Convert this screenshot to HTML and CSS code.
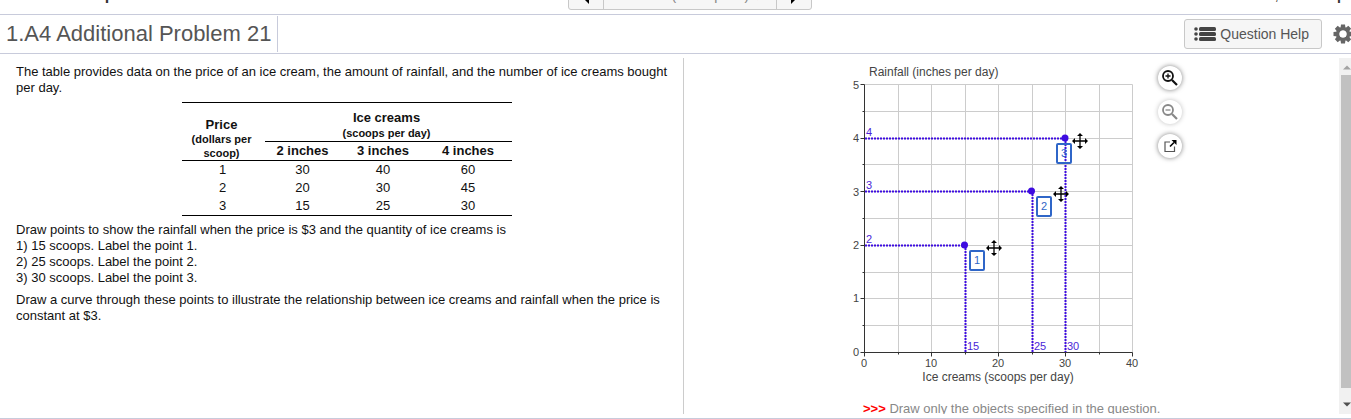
FILE: index.html
```html
<!DOCTYPE html>
<html lang="en">
<head>
<meta charset="utf-8">
<title>1.A4 Additional Problem 21</title>
<link rel="stylesheet" href="styles.css">
</head>
<body>
<div class="page">
  <div class="topbar">
    <div class="score"><b>Score:</b> 0 of 1 <b>pt</b></div>
    <div class="pager">
      <button class="pager-btn" aria-label="Previous question"><svg width="12" height="16" viewBox="0 0 12 16"><path d="M9 0v16L1 8z"/></svg></button>
      <button class="pager-label">16 of 42 (0 complete) <span class="caret">▼</span></button>
      <button class="pager-btn" aria-label="Next question"><svg width="12" height="16" viewBox="0 0 12 16"><path d="M3 0v16l8-8z"/></svg></button>
    </div>
    <div class="hw-score"><b>HW Score:</b> 33.33%, 14 of 42 <b>pts</b></div>
  </div>

  <header class="header">
    <h1 class="title">1.A4 Additional Problem 21</h1>
    <div class="header-tools">
      <button class="help-btn">
        <svg width="22" height="14" viewBox="0 0 22 14"><g fill="#444"><circle cx="2" cy="2" r="1.800"/><circle cx="2" cy="7" r="1.800"/><circle cx="2" cy="12" r="1.800"/><rect x="5" y="0" width="17" height="4" rx="1.500"/><rect x="5" y="5" width="17" height="4" rx="1.500"/><rect x="5" y="10" width="17" height="4" rx="1.500"/></g></svg>
        Question Help
      </button>
      <button class="gear-btn" aria-label="Settings">
        <svg width="20" height="20" viewBox="-10 -10 20 20"><g fill="#666"><path d="M-2-9.500h4L2.600-5h-5.200zM-2 9.500h4L2.600 5h-5.200z"/><path d="M-2-9.500h4L2.600-5h-5.200zM-2 9.500h4L2.600 5h-5.200z" transform="rotate(45)"/><path d="M-2-9.500h4L2.600-5h-5.200zM-2 9.500h4L2.600 5h-5.200z" transform="rotate(90)"/><path d="M-2-9.500h4L2.600-5h-5.200zM-2 9.500h4L2.600 5h-5.200z" transform="rotate(135)"/></g><circle r="5.300" fill="none" stroke="#666" stroke-width="3.600"/><circle r="3.500" fill="#fff"/></svg>
      </button>
    </div>
  </header>

  <main class="main">
    <section class="question">
      <p>The table provides data on the price of an ice cream, the amount of rainfall, and the number of ice creams bought per day.</p>
      <table class="data">
        <colgroup><col class="c1"><col class="c2"><col class="c3"><col class="c4"></colgroup>
        <thead>
          <tr><th class="price" rowspan="2" scope="col">Price<br><small>(dollars per scoop)</small></th><th class="group" colspan="3" scope="colgroup">Ice creams<br><small>(scoops per day)</small></th></tr>
          <tr class="sub"><th scope="col">2 inches</th><th scope="col">3 inches</th><th scope="col">4 inches</th></tr>
        </thead>
        <tbody>
          <tr><td>1</td><td>30</td><td>40</td><td>60</td></tr>
          <tr><td>2</td><td>20</td><td>30</td><td>45</td></tr>
          <tr><td>3</td><td>15</td><td>25</td><td>30</td></tr>
        </tbody>
      </table>
      <p>Draw points to show the rainfall when the price is $3 and the quantity of ice creams is<br>1) 15 scoops. Label the point 1.<br>2) 25 scoops. Label the point 2.<br>3) 30 scoops. Label the point 3.</p>
      <p>Draw a curve through these points to illustrate the relationship between ice creams and rainfall when the price is constant at $3.</p>
    </section>

    <section class="graph-pane">
      <div class="graph-row">
        <svg class="chart" width="300" height="332" viewBox="0 0 300 332" role="img" aria-label="Rainfall against ice creams">
          <g transform="translate(.5 .5)" fill="none">
            <path class="grid" d="M48 24v268M81 24v268M115 24v268M148 24v268M182 24v268M215 24v268M249 24v268M282 24v268M14 24h268M14 51h268M14 78h268M14 104h268M14 131h268M14 158h268M14 185h268M14 212h268M14 238h268M14 265h268"/>
            <path class="axis" d="M14 24v272M10 292h272M10 24h4M10 78h4M10 131h4M10 185h4M10 238h4M12 51h2M12 104h2M12 158h2M12 212h2M12 265h2M48 292v2M81 292v4M115 292v2M148 292v4M182 292v2M215 292v4M249 292v2M282 292v4"/>
          </g>
          <path class="guide" d="M15 78.500h200M15 131.500h167M15 185.500h100M215.500 78v214M182.500 131v161M115.500 185v107"/>
          <text class="axis-title" x="19" y="16">Rainfall (inches per day)</text>
          <text class="axis-title" x="148" y="321" text-anchor="middle">Ice creams (scoops per day)</text>
          <g class="tick" text-anchor="end">
            <text x="9" y="29">5</text><text x="9" y="82">4</text><text x="9" y="136">3</text><text x="9" y="189">2</text><text x="9" y="242">1</text><text x="9" y="296">0</text>
          </g>
          <g class="tick" text-anchor="middle">
            <text x="14" y="307">0</text><text x="81" y="307">10</text><text x="148" y="307">20</text><text x="215" y="307">30</text><text x="282" y="307">40</text>
          </g>
          <g class="value">
            <text x="16" y="76">4</text><text x="16" y="129">3</text><text x="16" y="183">2</text>
            <text x="117" y="290">15</text><text x="184" y="290">25</text><text x="217" y="290">30</text>
          </g>
          <g class="point"><circle cx="215" cy="78" r="3.500"/><circle cx="181.500" cy="131" r="3.500"/><circle cx="114.500" cy="185" r="3.500"/></g>
          <g class="tag"><rect x="207" y="84" width="14" height="19" rx="1"/><rect x="187" y="137" width="14" height="19" rx="1"/><rect x="120" y="191" width="14" height="19" rx="1"/></g>
          <g class="tag-text" text-anchor="middle"><text x="214" y="97">3</text><text x="194" y="150">2</text><text x="127" y="204">1</text></g>
          <defs><g id="move"><path d="M-6 0H6M0-6V6" stroke="#000" stroke-width="1.300"/><path d="M-8 0l3-3v6zM8 0l-3-3v6zM0-8l-3 3h6zM0 8l-3-3h6z"/></g></defs>
          <use href="#move" x="230" y="81"/><use href="#move" x="211" y="134"/><use href="#move" x="144" y="188"/>
        </svg>
        <div class="tools">
          <button class="tool" aria-label="Zoom in"><svg width="18" height="18" viewBox="0 0 18 18" fill="none" stroke="#111"><circle cx="7" cy="7" r="5" stroke-width="1.800"/><path d="M11 11l5 5" stroke-width="2.200"/><path d="M4.500 7h5M7 4.500v5" stroke-width="1.300"/></svg></button>
          <button class="tool off" aria-label="Zoom out"><svg width="18" height="18" viewBox="0 0 18 18" fill="none" stroke="#888"><circle cx="7" cy="7" r="5" stroke-width="1.800"/><path d="M11 11l5 5" stroke-width="2.200"/><path d="M4.500 7h5" stroke-width="1.300"/></svg></button>
          <button class="tool" aria-label="Open in new window"><svg width="14" height="14" viewBox="0 0 14 14" fill="none" stroke="#555"><path d="M7 3H2v9.500h9.500V7.500" stroke-width="1.200"/><path d="M7 7.500L11 3.500" stroke="#000" stroke-width="1.600"/><path d="M8.500 1h5v5z" fill="#000" stroke="none"/></svg></button>
        </div>
      </div>
      <p class="hint"><span class="marks">&gt;&gt;&gt;</span> Draw only the objects specified in the question.</p>
    </section>

    <div class="scrollbar" aria-hidden="true">
      <svg class="arrow" width="8" height="5" viewBox="0 0 8 5"><path d="M0 4.500L4 .500 8 4.500z" fill="#a3a3a3"/></svg>
      <div class="thumb"></div>
      <svg class="arrow" width="8" height="5" viewBox="0 0 8 5"><path d="M0 .500h8L4 4.500z" fill="#505050"/></svg>
    </div>
  </main>
</div>
</body>
</html>
```
FILE: styles.css
```css
* { box-sizing: border-box; }
body {
  margin: 0;
  background: #fff;
  color: #111;
  font: 13px/16px "Liberation Sans", Arial, sans-serif;
}
button { font-family: inherit; margin: 0; padding: 0; cursor: pointer; }
.page {
  display: flex;
  flex-direction: column;
  height: 100vh;
  overflow: hidden;
  border-bottom: 1px solid #c8cbdb;
}

.topbar {
  display: grid;
  flex: none;
  grid-template-columns: 1fr auto 1fr;
  grid-template-rows: 14px;
  align-items: end;
  height: 15px;
  overflow: hidden;
  border-bottom: 1px solid #c8cbdb;
  color: #333;
  white-space: nowrap;
}
.score { padding: 0 0 11px 6px; font-size: 16px; }
.hw-score {
  justify-self: end;
  margin-right: -7px;
  padding-bottom: 11px;
  font-size: 14px;
}
.pager {
  display: flex;
  width: 244px;
  height: 32px;
  margin-left: 28px;
  margin-bottom: 4px;
  border: 1px solid #c8c8c8;
  border-radius: 3px;
  background: #f6f6f6;
}
.pager button { border: 0; background: none; }
.pager .pager-btn {
  display: flex;
  width: 34px;
  align-items: center;
  justify-content: center;
  padding-top: 4px;
}
.pager .pager-label {
  flex: 1;
  padding-top: 2px;
  border: solid #c8c8c8;
  border-width: 0 1px;
  color: #888;
  font-size: 14px;
}
.caret { font-size: 9px; }

.header {
  display: flex;
  flex: none;
  justify-content: space-between;
  height: 39px;
  padding: 1px 0;
  border-bottom: 1px solid #c8cbdb;
}
.title {
  margin: 0;
  padding: 0 6px;
  border-right: 1px solid #c8cbdb;
  color: #555;
  font-size: 22px;
  font-weight: 400;
  line-height: 36px;
}
.header-tools { display: flex; align-items: center; gap: 11px; margin-right: -2px; }
.help-btn {
  display: flex;
  align-items: center;
  gap: 4px;
  height: 30px;
  padding: 0 12px 0 9px;
  border: 1px solid #c8c8c8;
  border-radius: 3px;
  background: #f6f6f6;
  color: #555;
  font-size: 14px;
}
.gear-btn { display: flex; border: 0; background: none; }

.main { display: flex; flex: 1; min-height: 0; padding: 4px 0; }
.question {
  width: 50.63%;
  padding: 6px 14px 0 16px;
  border-right: 1px solid #ccc;
}
.question p { margin: 0 0 6px; }
.data {
  width: 330px;
  margin: 0 0 6px 166px;
  table-layout: fixed;
  border-collapse: collapse;
  border-top: 1px solid #000;
  border-bottom: 1px solid #000;
  line-height: 18px;
  text-align: center;
}
.data th, .data td { padding: 0 2px 0 0; }
.data small { font-size: 11px; }
.c1 { width: 83px; }
.c2 { width: 77px; }
.c3 { width: 84px; }
.c4 { width: 86px; }
.data .price {
  padding-right: 4px;
  vertical-align: bottom;
  line-height: 14px;
  border-bottom: 1px solid #000;
}
.data .group {
  padding: 7px 4px 0 0;
  line-height: 15px;
  border-bottom: 1px solid #000;
}
.data .sub th { border-bottom: 1px solid #000; }

.graph-pane { flex: 1; min-width: 0; padding: 2px 0 0 166px; overflow: hidden; }
.graph-row { display: flex; gap: 8px; }
.chart { display: block; }
.chart text { font-size: 12px; }
.grid { stroke: #ccc; }
.axis { stroke: #333; }
.guide { fill: none; stroke: #3d0be0; stroke-width: 2; stroke-dasharray: 2 1; }
.axis-title { fill: #444; }
.chart .tick text { fill: #444; font-size: 11px; }
.chart .value text { fill: #4b1fd8; font-size: 11px; }
.point { fill: #3d0be0; }
.tag { fill: none; stroke: #2f66c8; stroke-width: 2; }
.chart .tag-text text { fill: #2f66c8; font-size: 11px; }
.tools { display: flex; flex-direction: column; gap: 10px; padding-top: 6px; }
.tool {
  display: flex;
  align-items: center;
  justify-content: center;
  width: 24px;
  height: 24px;
  border: 0;
  border-radius: 50%;
  background: #fff;
  box-shadow: 0 0 5px rgba(0, 0, 0, .5);
}
.tool.off { box-shadow: 0 0 5px rgba(0, 0, 0, .25); }
.hint {
  margin: 9px 0 0;
  padding-left: 13px;
  color: #888;
  font-size: 13px;
  white-space: nowrap;
}
.marks { color: #f00; font-weight: 700; }

.scrollbar {
  display: flex;
  flex-direction: column;
  align-items: flex-end;
  width: 12px;
  padding: 7px 0;
  background: #f1f1f1;
}
.thumb { flex: 1; width: 10px; margin: 5px 0 14px; background: #c1c1c1; }
.arrow { display: block; flex: none; }
```
